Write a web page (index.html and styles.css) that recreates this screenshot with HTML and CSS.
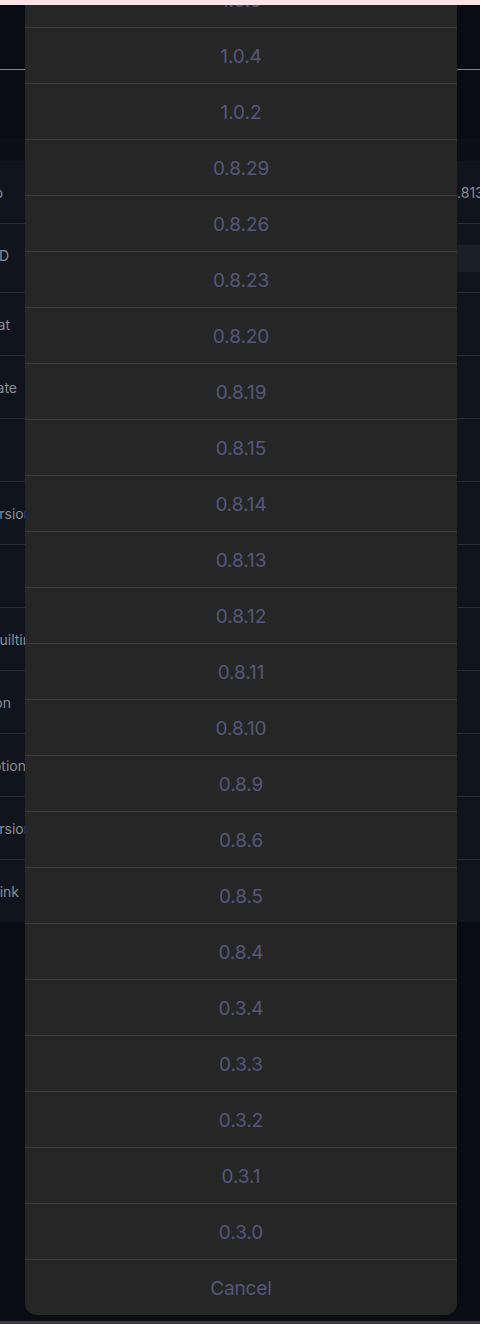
FILE: index.html
```html
<!DOCTYPE html>
<html lang="en">
<head>
<meta charset="utf-8">
<title>Select version</title>
<link rel="stylesheet" href="styles.css">
</head>
<body>
<div class="page">
  <div class="status-strip"></div>
  <header class="header"></header>
  <div class="subheader"></div>
  <div class="band"></div>
  <section class="panel">
    <div class="row">
      <div class="lbl e3"><span>App</span></div>
      <div class="gap"></div>
      <div class="val"><span>.813</span></div>
    </div>
    <div class="row tall">
      <div class="lbl e9"><span>Build ID</span></div>
      <div class="gap"></div>
      <div class="val"><div class="input"></div></div>
    </div>
    <div class="row">
      <div class="lbl e10"><span>Format</span></div>
      <div class="gap"></div>
      <div class="val"></div>
    </div>
    <div class="row">
      <div class="lbl e17"><span>Update</span></div>
      <div class="gap"></div>
      <div class="val"></div>
    </div>
    <div class="row">
      <div class="lbl eoff"><span>Size</span></div>
      <div class="gap"></div>
      <div class="val"></div>
    </div>
    <div class="row">
      <div class="lbl e30"><span>Version</span></div>
      <div class="gap"></div>
      <div class="val"></div>
    </div>
    <div class="row">
      <div class="lbl eoff"><span>Tag</span></div>
      <div class="gap"></div>
      <div class="val"></div>
    </div>
    <div class="row">
      <div class="lbl e34"><span>Builtin</span></div>
      <div class="gap"></div>
      <div class="val"></div>
    </div>
    <div class="row">
      <div class="lbl e9b"><span>Location</span></div>
      <div class="gap"></div>
      <div class="val"></div>
    </div>
    <div class="row">
      <div class="lbl e38"><span>Description</span></div>
      <div class="gap"></div>
      <div class="val"></div>
    </div>
    <div class="row">
      <div class="lbl e30"><span>Min Version</span></div>
      <div class="gap"></div>
      <div class="val"></div>
    </div>
    <div class="row last">
      <div class="lbl e19"><span>Link</span></div>
      <div class="gap"></div>
      <div class="val"></div>
    </div>
  </section>
  <div class="filler"></div>
  <div class="bottom-strip"></div>
</div>

<div class="sheet">
  <ul class="options">
    <li class="option">1.0.6</li>
    <li class="option">1.0.4</li>
    <li class="option">1.0.2</li>
    <li class="option">0.8.29</li>
    <li class="option">0.8.26</li>
    <li class="option">0.8.23</li>
    <li class="option">0.8.20</li>
    <li class="option">0.8.19</li>
    <li class="option">0.8.15</li>
    <li class="option">0.8.14</li>
    <li class="option">0.8.13</li>
    <li class="option">0.8.12</li>
    <li class="option">0.8.11</li>
    <li class="option">0.8.10</li>
    <li class="option">0.8.9</li>
    <li class="option">0.8.6</li>
    <li class="option">0.8.5</li>
    <li class="option">0.8.4</li>
    <li class="option">0.3.4</li>
    <li class="option">0.3.3</li>
    <li class="option">0.3.2</li>
    <li class="option">0.3.1</li>
    <li class="option">0.3.0</li>
    <li class="option cancel">Cancel</li>
  </ul>
</div>
</body>
</html>
```
FILE: styles.css
```css
* { box-sizing: border-box; }

html, body {
  margin: 0;
  padding: 0;
  height: 100%;
  overflow: hidden;
  background: #090c13;
  font-family: Inter, "Noto Sans", "Liberation Sans", sans-serif;
}

.page {
  display: flex;
  flex-direction: column;
  height: 1324px;
}

.status-strip {
  height: 5px;
  background: #fbe2e7;
  position: relative;
  z-index: 3;
  flex: none;
}

.header {
  height: 65px;
  border-bottom: 1px solid #80838a;
  flex: none;
}

.subheader {
  height: 69px;
  flex: none;
}

.band {
  height: 22px;
  background: #0c0f16;
  flex: none;
}

.panel {
  background: #10141c;
  flex: none;
}

.row {
  display: grid;
  grid-template-columns: 25px 1fr 23px;
  height: 63px;
  border-bottom: 1px solid #2a2e36;
  align-items: center;
}

.row.tall { height: 69px; }
.row.tall .lbl { margin-bottom: 6px; }
.row.last { height: 62px; border-bottom: none; }

.lbl {
  display: flex;
  justify-content: flex-end;
  overflow: hidden;
  font-size: 14px;
  color: #8b8e95;
  white-space: nowrap;
}

.lbl span { flex: none; }

.e3 { padding-right: 22px; }
.e9 { padding-right: 16px; }
.e9b { padding-right: 14px; }
.e10 { padding-right: 15px; }
.e17 { padding-right: 8px; }
.e19 { padding-right: 6px; }
.e30 span { margin-right: -7px; }
.e34 span { margin-right: -6px; }
.e38 span { margin-right: -1px; }
.eoff { padding-right: 60px; }

.val {
  overflow: hidden;
  white-space: nowrap;
  font-size: 14px;
  color: #8b8e95;
  display: flex;
  align-items: center;
}

.input {
  width: 100%;
  height: 27px;
  background: #1a1e26;
}

.filler { flex: 1; }

.bottom-strip {
  height: 3px;
  background: #3a3b40;
  flex: none;
}

.sheet {
  position: absolute;
  left: 25px;
  top: -28px;
  width: 432px;
  background: #262626;
  border-radius: 0 0 12px 12px;
  z-index: 2;
  overflow: hidden;
}

.options {
  list-style: none;
  margin: 0;
  padding: 0;
}

.option {
  height: 56px;
  padding-top: 2px;
  border-bottom: 1px solid #3c3c3c;
  display: flex;
  align-items: center;
  justify-content: center;
  font-size: 19px;
  color: #55587a;
  letter-spacing: -0.1px;
}

.option.cancel {
  height: 55px;
  border-bottom: none;
}
```
